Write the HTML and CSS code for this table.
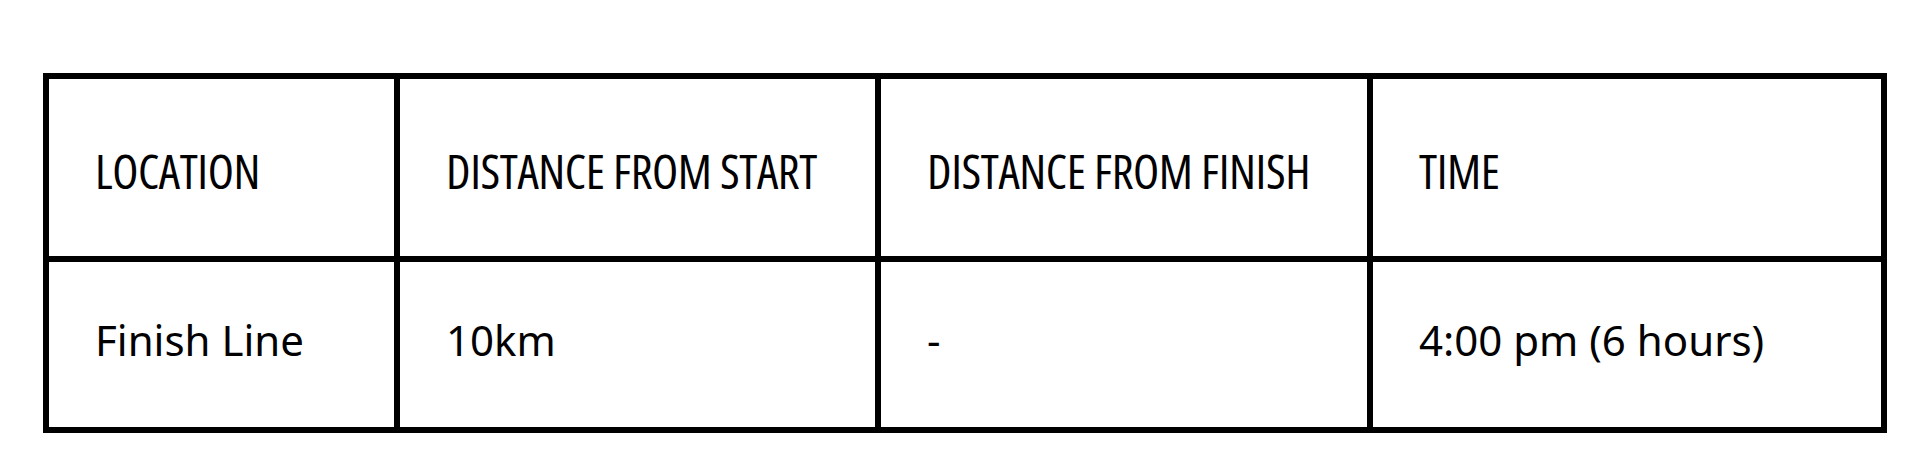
FILE: index.html
```html
<!DOCTYPE html>
<html lang="en">
<head>
<meta charset="utf-8">
<title>Schedule</title>
<link rel="stylesheet" href="styles.css">
</head>
<body>
<div class="page">
  <table class="schedule">
    <colgroup>
      <col class="c1">
      <col class="c2">
      <col class="c3">
      <col class="c4">
    </colgroup>
    <thead>
      <tr>
        <th>LOCATION</th>
        <th>DISTANCE FROM START</th>
        <th>DISTANCE FROM FINISH</th>
        <th>TIME</th>
      </tr>
    </thead>
    <tbody>
      <tr>
        <td>Finish Line</td>
        <td>10km</td>
        <td>-</td>
        <td>4:00 pm (6 hours)</td>
      </tr>
    </tbody>
  </table>
</div>
</body>
</html>
```

FILE: styles.css
```css
html, body {
  margin: 0;
  padding: 0;
  background: #ffffff;
}

.page {
  padding: 73px 27px 0 43px;
}

.schedule {
  table-layout: fixed;
  width: 1844px;
  border-collapse: separate;
  border-spacing: 0;
  border-left: 6px solid #000;
  border-top: 6px solid #000;
  box-sizing: border-box;
}

.c1 { width: 351px; }
.c2 { width: 481px; }
.c3 { width: 492px; }
.c4 { width: 514px; }

.schedule th,
.schedule td {
  box-sizing: border-box;
  border-right: 6px solid #000;
  border-bottom: 6px solid #000;
  padding: 0 0 0 46px;
  text-align: left;
  vertical-align: middle;
  color: #000;
  white-space: nowrap;
}

.schedule th {
  height: 183px;
  padding-top: 6px;
  font-family: "Open Sans", sans-serif;
  font-stretch: 75%;
  font-weight: 500;
  font-size: 48px;
  letter-spacing: -0.4px;
  line-height: 1;
}

.schedule td {
  height: 171px;
  padding-bottom: 8px;
  font-family: "Noto Sans", sans-serif;
  font-size: 42px;
  line-height: 1.2;
  font-weight: 400;
}
```
